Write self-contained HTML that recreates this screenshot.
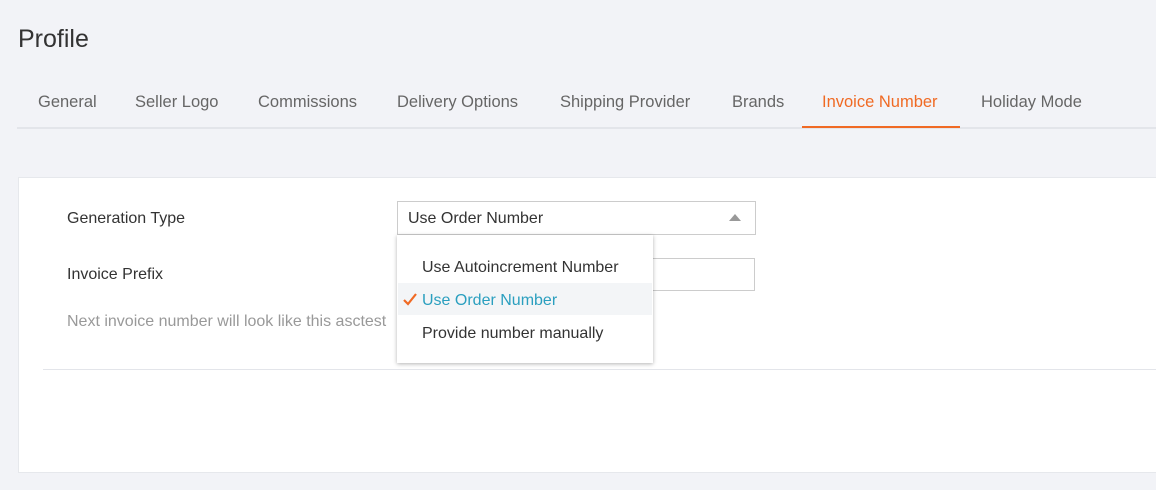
<!DOCTYPE html>
<html><head><style>
body{margin:0;width:1156px;height:490px;background:#f2f3f7;font-family:"Liberation Sans",sans-serif;position:relative;overflow:hidden}
.a{position:absolute;white-space:nowrap}
.tab{position:absolute;top:93px;font-size:16.5px;color:#666}
</style></head><body>
<div class="a" style="left:18px;top:25px;font-size:25px;color:#333">Profile</div>
<div class="tab" style="left:38px">General</div>
<div class="tab" style="left:135px">Seller Logo</div>
<div class="tab" style="left:258px">Commissions</div>
<div class="tab" style="left:397px">Delivery Options</div>
<div class="tab" style="left:560px">Shipping Provider</div>
<div class="tab" style="left:732px">Brands</div>
<div class="tab" style="left:822px;color:#f06a24">Invoice Number</div>
<div class="tab" style="left:981px">Holiday Mode</div>
<div class="a" style="left:17px;right:0;top:127px;height:2px;background:#e3e5ea"></div>
<div class="a" style="left:802px;width:158px;top:126px;height:2px;background:#f06a24"></div>
<div class="a" style="left:18px;right:0;top:177px;height:294px;background:#fff;border:1px solid #e6e8ec;border-right:none"></div>
<div class="a" style="left:67px;top:210px;font-size:16px;color:#333">Generation Type</div>
<div class="a" style="left:397px;top:201px;width:357px;height:32px;border:1px solid #ccc;background:#fff"></div>
<div class="a" style="left:408px;top:210px;font-size:16px;color:#333">Use Order Number</div>
<div class="a" style="left:729px;top:214px;width:0;height:0;border-left:6px solid transparent;border-right:6px solid transparent;border-bottom:7px solid #999"></div>
<div class="a" style="left:67px;top:266px;font-size:16px;color:#333">Invoice Prefix</div>
<div class="a" style="left:397px;top:258px;width:356px;height:31px;border:1px solid #ccc;background:#fff"></div>
<div class="a" style="left:67px;top:313px;font-size:16px;color:#999">Next invoice number will look like this asctest</div>
<div class="a" style="left:43px;right:0;top:369px;height:1px;background:#e3e5ea"></div>
<div class="a" style="left:397px;top:235px;width:256px;height:128px;background:#fff;box-shadow:0 1px 4px rgba(0,0,0,.3)"></div>
<div class="a" style="left:398px;top:283px;width:254px;height:32px;background:#f3f5f7"></div>
<div class="a" style="left:422px;top:259px;font-size:16px;color:#333">Use Autoincrement Number</div>
<div class="a" style="left:422px;top:292px;font-size:16px;color:#2a9fbf">Use Order Number</div>
<div class="a" style="left:422px;top:325px;font-size:16px;color:#333">Provide number manually</div>
<svg class="a" style="left:402px;top:292px" width="16" height="14"><path d="M2 8 L6 12 L14 2" stroke="#f06a24" stroke-width="2.2" fill="none"/></svg>
</body></html>
